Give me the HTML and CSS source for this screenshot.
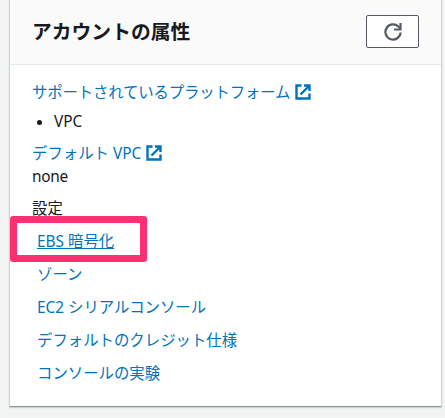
FILE: index.html
```
<!DOCTYPE html>
<html lang="ja">
<head>
    <meta charset="UTF-8">
    <meta name="viewport" content="width=device-width, initial-scale=1.0">
    <title>アカウントの属性</title>
    <link rel="stylesheet" href="styles.css">
</head>
<body>
    <div class="card">
        <div class="card-header">
            <h2>アカウントの属性</h2>
            <button class="refresh" type="button" aria-label="更新">
                <svg width="20" height="20" viewBox="0 0 20 20">
                    <path d="M17.6 10.5a7.6 7.6 0 1 1-2.3-6l2 2"/>
                    <path d="M17.5 1v6.5H11"/>
                </svg>
            </button>
        </div>
        <div class="card-body">
            <div class="attribute">
                <a class="external" href="#"><span class="long">サポートされているプラットフォーム</span><svg width="16" height="16" viewBox="0 0 16 16"><path d="M6.5 1.5h-5v13h13v-5M9 1.5h5.5V7M14.5 1.5l-9 9"/></svg></a>
                <ul class="platforms">
                    <li>VPC</li>
                </ul>
            </div>
            <div class="attribute">
                <a class="external" href="#">デフォルト VPC<svg width="16" height="16" viewBox="0 0 16 16"><path d="M6.5 1.5h-5v13h13v-5M9 1.5h5.5V7M14.5 1.5l-9 9"/></svg></a>
                <div class="value">none</div>
            </div>
            <div class="settings-title">設定</div>
            <div class="settings">
                <div class="highlighted"><a class="active" href="#">EBS 暗号化</a></div>
                <a href="#">ゾーン</a>
                <a href="#">EC2 シリアルコンソール</a>
                <a href="#">デフォルトのクレジット仕様</a>
                <a href="#">コンソールの実験</a>
            </div>
        </div>
    </div>
</body>
</html>
```
FILE: styles.css
```
* {
    box-sizing: border-box;
}
body {
    font-family: "Noto Sans", "Noto Sans CJK JP", sans-serif;
    font-size: 15.4px;
    line-height: 22px;
    background-color: #f2f3f3;
    color: #16191f;
    margin: 0;
    padding: 0 4px 11px 10px;
}
.card {
    height: 407px;
    background: #fff;
    border-bottom: 1px solid #879596;
    box-shadow: 0 0 1px 1px rgba(0, 28, 36, 0.15);
}
.card-header {
    display: flex;
    align-items: center;
    justify-content: space-between;
    height: 65px;
    padding: 0 22px;
    background-color: #fafafa;
    border-bottom: 1px solid #e3e8e8;
}
h2 {
    margin: 0;
    font-size: 19.8px;
    line-height: 28px;
    font-weight: bold;
}
.refresh {
    display: flex;
    align-items: center;
    justify-content: center;
    width: 53px;
    height: 33px;
    margin-top: -1px;
    padding: 0;
    background: #fff;
    border: 1px solid #545b64;
    border-radius: 2px;
}
svg {
    fill: none;
    stroke: currentColor;
    stroke-width: 2.4;
}
.refresh svg {
    color: #545b64;
    stroke-width: 2.2;
}
.card-body {
    padding: 17px 22px;
}
.attribute {
    margin-bottom: 10px;
}
a {
    color: #0073bb;
    text-decoration: none;
}
.external {
    display: flex;
    align-items: center;
    gap: 5px;
    white-space: pre;
}
.external svg {
    margin-top: -2px;
}
.long {
    letter-spacing: -0.15px;
}
.platforms {
    margin: 7px 0 0;
    padding-left: 22px;
}
.value {
    margin-top: 1px;
    letter-spacing: -0.3px;
}
.settings-title {
    margin-top: 10px;
}
.settings {
    display: flex;
    flex-direction: column;
    gap: 11px;
    margin-top: 11px;
    padding-left: 5px;
}
.active {
    text-decoration: underline;
}
.highlighted {
    position: relative;
}
/* callout frame around the current setting */
.highlighted::before {
    content: "";
    position: absolute;
    left: -27px;
    top: -15px;
    width: 137px;
    height: 46px;
    box-sizing: border-box;
    border: 7px solid #ff3071;
    border-radius: 3px;
    pointer-events: none;
}
```
